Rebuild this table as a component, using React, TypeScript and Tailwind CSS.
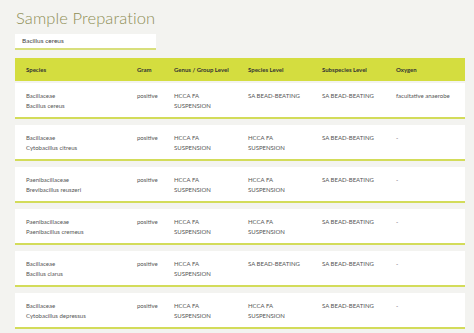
import React from "react";

type Row = {
  family: string;
  species: string;
  gram: string;
  genus: string[];
  speciesLevel: string[];
  subspecies: string;
  oxygen: string;
};

const rows: Row[] = [
  { family: "Bacillaceae", species: "Bacillus cereus", gram: "positive", genus: ["HCCA FA", "SUSPENSION"], speciesLevel: ["SA BEAD-BEATING"], subspecies: "SA BEAD-BEATING", oxygen: "facultative anaerobe" },
  { family: "Bacillaceae", species: "Cytobacillus citreus", gram: "positive", genus: ["HCCA FA", "SUSPENSION"], speciesLevel: ["HCCA FA", "SUSPENSION"], subspecies: "SA BEAD-BEATING", oxygen: "-" },
  { family: "Paenibacillaceae", species: "Brevibacillus reuszeri", gram: "positive", genus: ["HCCA FA", "SUSPENSION"], speciesLevel: ["HCCA FA", "SUSPENSION"], subspecies: "SA BEAD-BEATING", oxygen: "-" },
  { family: "Paenibacillaceae", species: "Paenibacillus cremeus", gram: "positive", genus: ["HCCA FA", "SUSPENSION"], speciesLevel: ["HCCA FA", "SUSPENSION"], subspecies: "SA BEAD-BEATING", oxygen: "-" },
  { family: "Bacillaceae", species: "Bacillus clarus", gram: "positive", genus: ["HCCA FA", "SUSPENSION"], speciesLevel: ["SA BEAD-BEATING"], subspecies: "SA BEAD-BEATING", oxygen: "-" },
  { family: "Bacillaceae", species: "Cytobacillus depressus", gram: "positive", genus: ["HCCA FA", "SUSPENSION"], speciesLevel: ["HCCA FA", "SUSPENSION"], subspecies: "SA BEAD-BEATING", oxygen: "-" },
];

const cols = "grid grid-cols-[111px_37px_74px_74px_74px_1fr]";

export default function App() {
  return (
    <div
      className="w-[474px] h-[333px] overflow-hidden bg-[#f3f3f0] pl-[15px] pr-[9px] pt-[7px]"
      style={{ fontFamily: "Lato, 'Open Sans', sans-serif" }}
    >
      <h1 className="text-[16.5px] leading-[22px] font-light text-[#8e8e55] pl-[1px] tracking-[0.1px]">
        Sample Preparation
      </h1>
      <div className="mt-[5px] w-[141px] h-[16px] bg-white border-b-2 border-[#d8df7c] flex items-center pl-[7px] text-[6.5px] text-[#444]">
        Bacillus cereus
      </div>
      <div className={`${cols} mt-[8px] h-[23px] items-center bg-[#d4dd3f] pl-[11px] text-[6px] font-bold text-[#333]`}>
        <div>Species</div>
        <div>Gram</div>
        <div>Genus / Group Level</div>
        <div>Species Level</div>
        <div>Subspecies Level</div>
        <div>Oxygen</div>
      </div>
      <div className="flex flex-col gap-[6px] mt-[2px]">
        {rows.map((r, i) => (
          <div
            key={i}
            className={`${cols} h-[36px] bg-white border-b-2 border-[#d3dc5a] pl-[11px] pt-[8px] text-[6px] leading-[10px] text-[#555]`}
          >
            <div>
              <div>{r.family}</div>
              <div>{r.species}</div>
            </div>
            <div>{r.gram}</div>
            <div>
              {r.genus.map((g, j) => (
                <div key={j}>{g}</div>
              ))}
            </div>
            <div>
              {r.speciesLevel.map((g, j) => (
                <div key={j}>{g}</div>
              ))}
            </div>
            <div>{r.subspecies}</div>
            <div>{r.oxygen}</div>
          </div>
        ))}
      </div>
    </div>
  );
}
